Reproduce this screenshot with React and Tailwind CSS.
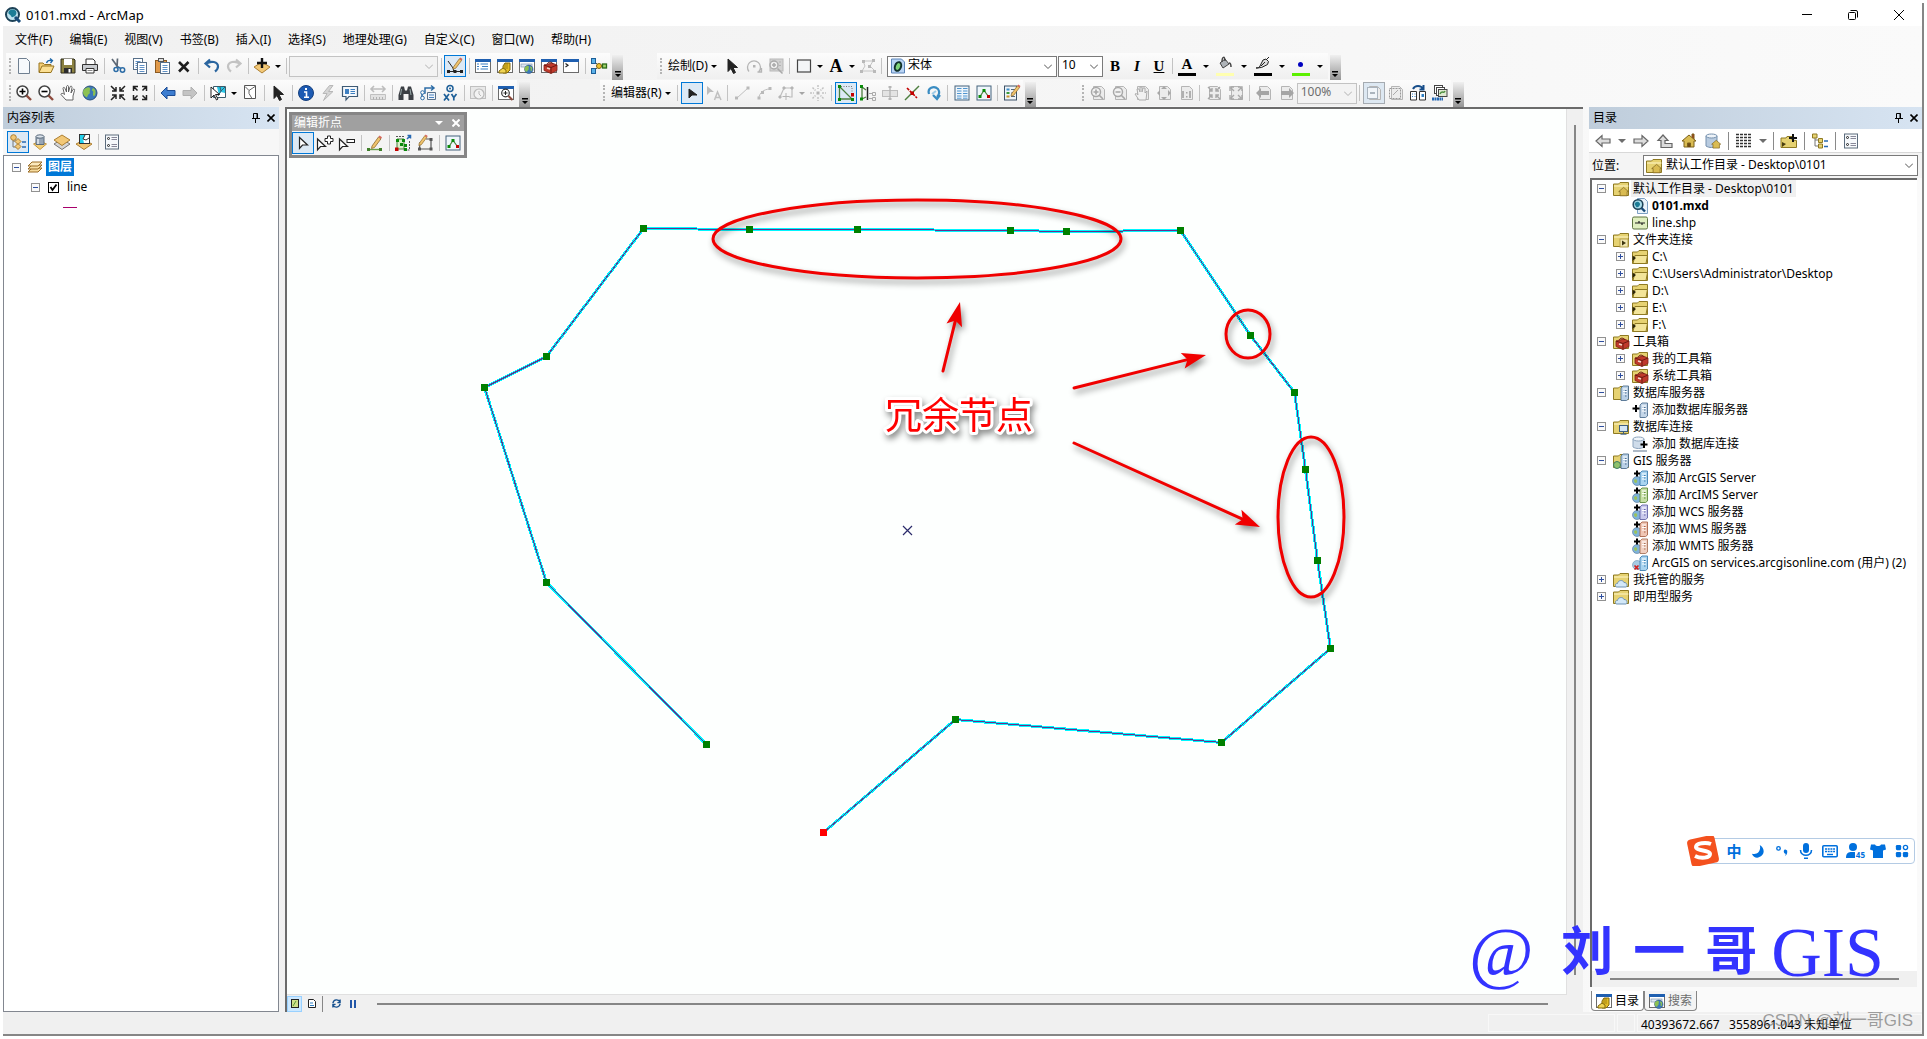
import React, { useState } from "react";
import clsx from "clsx";

const FONT = "font-['Noto_Sans','Noto_Sans_CJK_SC',sans-serif]";

const appWindow = (
  <>
    <rect x="0.5" y="1.5" width="15" height="13" fill="#fff" stroke="#6b6b6b" />
    <rect x="0" y="1" width="16" height="3" fill="#1f5fb0" />
  </>
);

const folder = (
  <path d="M.5 14.500V3h5l1.500-1.500h8.500v13z" fill="#e6d272" stroke="#8f7a22" />
);

const page = (
  <path d="M2.500.500h8l3 3v12h-11z" fill="#f6f9fc" stroke="#6f7f90" />
);

const grayPage = (
  <path d="M3.500 1.500h8l3 3v10h-11z" fill="#ececec" stroke="#b5b5b5" />
);

const globe = (
  <>
    <circle cx="8" cy="8" r="7" fill="#3b78b8" stroke="#2a4f7c" />
    <path d="M4 3c3-2 5 0 4 2s1 3-1 4-1 4-3 3-3-3-3-5 1-3 3-4zm7 0c3 1 3 5 2 7s-2 1-2-1 1-2-.5-3 0-2 .5-3z" fill="#8cc152" />
  </>
);

const toolbox = (
  <>
    <path d="M3 7l8-2 5 2v5.500l-6 3-7-3z" fill="#c0392b" stroke="#7e1f17" strokeWidth="0.8" />
    <path d="M3 7l7 2.500L16 7M10 9.500v6M6.500 6c0-2.500 5-2.500 5 0" fill="none" stroke="#6d1a13" />
    <path d="M6 10l3 1" stroke="#f3d9c9" strokeWidth="1.500" />
  </>
);

const magnifier = (
  <>
    <circle cx="6.500" cy="6.500" r="5.500" fill="#fff" stroke="#444" strokeWidth="1.500" />
    <path d="M10.500 10.500l4.500 4.500" stroke="#8d4a3c" strokeWidth="2.400" />
  </>
);

const house = (
  <path d="M8 2l7 6h-2v6H3V8H1z" fill="#d9bb52" stroke="#7c611b" />
);

const smallPage = (x, y) => (
  <>
    <rect x={x} y={y} width="9" height="11" fill="#fff" stroke="#58708a" />
    <path d={`M${x + 2} ${y + 3}h5M${x + 2} ${y + 5}h5M${x + 2} ${y + 7}h5M${x + 2} ${y + 9}h5`} stroke="#4c83c0" strokeWidth="0.9" />
  </>
);

const pencil = (
  <>
    <path d="M5 11l6.500-9 2.500 1.800L7.500 12.500 4.500 13.500z" fill="#f0c36d" stroke="#8d6a2b" strokeWidth="0.8" />
    <path d="M11.500 2l1-1.500 2.500 1.800-1 1.500z" fill="#d9655b" />
  </>
);

const server = (tint, dark) => (
  <>
    <path d="M8 3l2-2h5.500v13l-2 1.500H8z" fill={tint} stroke={dark} strokeWidth="0.9" />
    <path d="M10 4h4M10 6.500h4M10 9h4" stroke="#fff" strokeWidth="1.200" />
    <path d="M12 5.500h1.500M12 8h1.500M12 11h1.500" stroke={dark} />
  </>
);

const addServer = (tint, dark) => (
  <>
    <circle cx="5" cy="11" r="4.500" fill="#7fb3d9" stroke="#55779a" strokeWidth="0.6" />
    <path d="M2 10c2-2 4 0 3 2s-3 1-3-2z" fill="#9cc45a" />
    {server(tint, dark)}
    <path d="M5 .500v6M2 3.500h6" stroke="#000" strokeWidth="2" />
  </>
);

const ICONS = {
  arcmap: (
    <>
      <circle cx="7.500" cy="7.500" r="6.500" fill="#bfe3ef" stroke="#1d4257" strokeWidth="2" />
      <path d="M4 4c2-2 5-2 7 0 1 2 0 4-1 5-2 1-3 2-4 0S2 7 4 4z" fill="#1b7c95" />
      <path d="M10 10l5 5" stroke="#174a78" strokeWidth="3" />
    </>
  ),
  new: page,
  open: (
    <>
      <path d="M1 14V5h4l1.500 1.500H13V8" fill="#f4cf77" stroke="#98741f" />
      <path d="M1 14.500l3-6.500h12l-3 6.500z" fill="#fbdf93" stroke="#98741f" />
      <path d="M8.500 5c1-3 3-3 5-2.500M12 .500l2.500 2-2 2.500" fill="none" stroke="#1e67a8" strokeWidth="1.300" />
    </>
  ),
  save: (
    <>
      <path d="M1 1h13l1 1v13H1z" fill="#8b8141" stroke="#2c2a1a" />
      <rect x="4" y="1" width="8" height="6" fill="#fff" />
      <rect x="4" y="10" width="8" height="5" fill="#2b2b2b" />
      <rect x="8.500" y="11" width="2" height="3.500" fill="#fff" />
    </>
  ),
  print: (
    <>
      <path d="M4 6V1h7l2 2v3" fill="#fff" stroke="#333" />
      <path d="M.500 6.500h15v6H.500z" fill="#c9ccd0" stroke="#333" />
      <path d="M4 10.500h8v4.500H4z" fill="#fff" stroke="#333" />
      <path d="M5.500 12.500h5" stroke="#888" />
    </>
  ),
  cut: (
    <>
      <path d="M2 1l6.500 9M7.500 .500L7 9" stroke="#5d6875" strokeWidth="1.700" />
      <circle cx="6" cy="11.500" r="2" fill="none" stroke="#2c6ca6" strokeWidth="1.500" />
      <circle cx="12.500" cy="12" r="2.200" fill="none" stroke="#2c6ca6" strokeWidth="1.500" />
      <path d="M8 9l3 1.500" stroke="#2c6ca6" strokeWidth="1.500" />
    </>
  ),
  copy: (
    <>
      {smallPage(1.5, 0.5)}
      {smallPage(5.5, 4.5)}
    </>
  ),
  paste: (
    <>
      <rect x="1.500" y="2.500" width="11" height="12" fill="#e0994a" stroke="#8a5a22" />
      <rect x="4.500" y=".500" width="5" height="3" fill="#ddd" stroke="#555" />
      {smallPage(6.5, 4.5)}
    </>
  ),
  delete: <path d="M3 4l9.500 9.500M12.500 4L3 13.500" stroke="#1d1d1d" strokeWidth="2.600" />,
  undo: <path d="M6 1.500L1.500 5.500 6 9.500M2 5.500c5-3 12-2 12 3 0 2-1 3.500-3 5" fill="none" stroke="#2a659f" strokeWidth="2.200" />,
  redo: <path d="M10 1.500l4.500 4L10 9.500M14 5.500C9 2.500 2 3.500 2 8.500c0 2 1 3.500 3 5" fill="none" stroke="#c3c3c3" strokeWidth="2.200" />,
  addData: (
    <>
      <path d="M0 9l8-5 8 5-8 6z" fill="#f2c877" stroke="#ad7f31" />
      <path d="M8 0v10M3 5h10" stroke="#111" strokeWidth="2.400" />
    </>
  ),
  editor: (
    <>
      <path d="M1 3l5 7 1 4" fill="none" stroke="#222" />
      <path d="M1 13.500h14" stroke="#222" />
      <path d="M0 12h3v3H0zM6.500 12h3v3h-3zM13 12h3v3h-3z" fill="#222" />
      <g transform="translate(2 -1) scale(.9)">{pencil}</g>
    </>
  ),
  toc: (
    <>
      {appWindow}
      <path d="M2 6h2M5.500 6H13M2 8.500h2M7 8.500h6M2 11h2M5.500 11H13" stroke="#3d7fc1" strokeWidth="1.200" />
    </>
  ),
  catalog: (
    <>
      {appWindow}
      <path d="M6 8l2-3h5v7l-3 3H6z" fill="#e3bc25" stroke="#846a0d" />
      <path d="M8 5v6M10 5v6" stroke="#846a0d" strokeWidth="0.7" />
      <path d="M2 15v-2l4-3 3 2v3z" fill="#f0d454" stroke="#846a0d" />
    </>
  ),
  search: (
    <>
      {appWindow}
      <rect x="2" y="6" width="11" height="3" fill="#dfe8f2" stroke="#8298b3" strokeWidth="0.7" />
      <g transform="translate(5 6.500) scale(.6)">{globe}</g>
    </>
  ),
  toolboxWindow: (
    <>
      {appWindow}
      {toolbox}
    </>
  ),
  python: (
    <>
      {appWindow}
      <path d="M2.500 5.500l2.500 1.800L2.500 9" fill="none" stroke="#222" strokeWidth="1.200" />
    </>
  ),
  model: (
    <>
      <path d="M3 3l5 5h4M3 13l5-5" fill="none" stroke="#555" />
      <rect x="0.500" y="0.500" width="4" height="5" fill="#5bb1e8" stroke="#1c5f98" />
      <rect x="0.500" y="10.500" width="4" height="5" fill="#5bb1e8" stroke="#1c5f98" />
      <circle cx="8" cy="8" r="2.500" fill="#f1c430" stroke="#7c6412" />
      <rect x="11.500" y="6" width="4" height="4" fill="#9fd06c" stroke="#2c6b19" strokeWidth="1.300" />
    </>
  ),
  zoomIn: (
    <>
      {magnifier}
      <path d="M6.500 3.500v6M3.500 6.500h6" stroke="#000" strokeWidth="1.600" />
    </>
  ),
  zoomOut: (
    <>
      {magnifier}
      <path d="M3.500 6.500h6" stroke="#000" strokeWidth="1.600" />
    </>
  ),
  pan: <path d="M6 15L1 9.500c0-1.500 2-1.500 3.500 0L3 3.500c0-1.500 1.500-1.500 2 0L6.500 7V1.500c.5-1.500 2-1 2 0V7l1.500-5c.5-1.500 2-1 2 .5L11 8l2-3.500c1-1 2 0 1.500 1L13 11v4z" fill="#fff" stroke="#555" strokeWidth="0.9" />,
  globe,
  fixedIn: (
    <path d="M1 1l5 5M15 1l-5 5M1 15l5-5M15 15l-5-5M6 2v4H2M10 2v4h4M2 10h4v4M14 10h-4v4" fill="none" stroke="#222" strokeWidth="1.500" />
  ),
  fixedOut: (
    <path d="M1.500 1.500l4 4M14.500 1.500l-4 4M1.500 14.500l4-4M14.500 14.500l-4-4M1.500 6V1.500H6M10 1.500h4.500V6M6 14.500H1.500V10M14.500 10v4.500H10" fill="none" stroke="#222" strokeWidth="1.500" />
  ),
  back: <path d="M1 8l6-6v3.500h8v5H7V14z" fill="#3d7dd0" stroke="#1c4c94" />,
  forward: <path d="M15 8L9 2v3.500H1v5h8V14z" fill="#c4c4c4" stroke="#b0b0b0" />,
  selectFeatures: (
    <>
      <path d="M3.500 1.500h12v11h-12z" fill="#fff" stroke="#3a5b6b" />
      <path d="M7 2h8v6l-4-1-2 3z" fill="#28c6e6" />
      <path d="M10 2l1 4-3 5M11 6l4-4" fill="none" stroke="#3a5b6b" />
      <path d="M1 2v11l3-3 2.500 5 1.500-1-2.500-4.500h4z" fill="#fff" stroke="#222" />
    </>
  ),
  clearSelection: (
    <>
      <path d="M2.500.500h11v13h-11z" fill="#fff" stroke="#555" />
      <path d="M3 1.500l4 4 6-4M7 5.500v3l3 5" fill="none" stroke="#666" />
    </>
  ),
  pointer: <path d="M4 1v12.500l3-3 2.500 5 2-1L9 9.500h4.500z" fill="#222" stroke="#222" />,
  identify: (
    <>
      <circle cx="8" cy="8" r="7.500" fill="#1d5bb3" stroke="#16407e" />
      <path d="M6 7h2.500v5M6 12.300h5" fill="none" stroke="#fff" strokeWidth="1.600" />
      <rect x="7" y="3" width="2" height="2" fill="#fff" />
    </>
  ),
  hyperlink: <path d="M9.500.500L3 8.500h4L3.500 15.500 13 6.500H8.500L13 .500z" fill="#d5d5d5" stroke="#b8b8b8" />,
  popup: (
    <>
      <path d="M.500 1.500h15v10H7l-3 3.500v-3.500H.500z" fill="#f4f8fc" stroke="#3d5a75" strokeWidth="1.200" />
      <rect x="3" y="4" width="4" height="5" fill="#3d7fc1" />
      <path d="M8.500 4.500H13M8.500 6.500H13M8.500 8.500H13" stroke="#3d7fc1" />
    </>
  ),
  measure: (
    <>
      <path d="M1 4h14M4 1L1 4l3 3M12 1l3 3-3 3" fill="none" stroke="#bdbdbd" strokeWidth="1.600" />
      <path d="M.500 9.500h15v5H.500z" fill="#e2e2e2" stroke="#c0c0c0" />
      <path d="M3.500 12v2.500M6.500 12v2.500M9.500 12v2.500M12.500 12v2.500" stroke="#b0b0b0" />
    </>
  ),
  find: (
    <>
      <path d="M3 1.500h3l1 4h2l1-4h3l2.500 8.500v5h-5V9h-5v6h-5v-5z" fill="#3b3f44" />
      <path d="M3.500 4L2.500 10M12 4l1 6" stroke="#9aa" />
    </>
  ),
  findRoute: (
    <>
      <path d="M2 12V8h3V3h9M11 .500L14 3l-3 2.500" fill="none" stroke="#2c6ca6" strokeWidth="1.500" />
      <circle cx="2.500" cy="7.500" r="1.800" fill="#fff" stroke="#2c6ca6" />
      <circle cx="2.500" cy="13" r="1.800" fill="#fff" stroke="#2c6ca6" />
      <path d="M7.500 7.500h8v7h-8z" fill="#eef4fa" stroke="#58708a" />
      <path d="M9 10h5M9 12.500h5" stroke="#4c83c0" />
    </>
  ),
  goToXY: (
    <>
      <circle cx="8" cy="3.500" r="3" fill="none" stroke="#1d5f98" strokeWidth="1.500" />
      <circle cx="8" cy="3.500" r="1" fill="#1d5f98" />
      <path d="M2 9l5 6.500M7 9l-5 6.500M9.500 9l2.300 3.500L14.500 9M11.800 12v3.500" fill="none" stroke="#1d5f98" strokeWidth="1.700" />
    </>
  ),
  time: (
    <>
      <rect x=".500" y="1.500" width="15" height="12" fill="#e8e8e8" stroke="#c0c0c0" />
      <circle cx="9" cy="9" r="5" fill="#f2f2f2" stroke="#b9b9b9" strokeWidth="1.200" />
      <path d="M9 6v3l2 2" fill="none" stroke="#b9b9b9" />
    </>
  ),
  viewer: (
    <>
      {appWindow}
      <circle cx="7.500" cy="8" r="3.800" fill="#fff" stroke="#333" strokeWidth="1.200" />
      <path d="M7.500 6v4M5.500 8h4" stroke="#222" />
      <path d="M10.500 11l4 4" stroke="#8d4a3c" strokeWidth="2" />
    </>
  ),
  rotate: (
    <>
      <path d="M3 13.500a6.500 6.500 0 1 1 10 0M15.500 10v4h-4" fill="none" stroke="#b5b5b5" strokeWidth="1.300" />
      <rect x="7" y="7" width="2.500" height="2.500" fill="#b5b5b5" />
    </>
  ),
  zoomSelected: (
    <>
      <rect x="2" y="1" width="13" height="12" fill="#d2d2d2" stroke="#b8b8b8" />
      <circle cx="6" cy="7" r="4" fill="#eee" stroke="#a9a9a9" strokeWidth="1.400" />
      <path d="M6 5v4M4 7h4M12 3.500v1M12 7v1M9.500 10.500l5 5" stroke="#a9a9a9" strokeWidth="1.500" />
    </>
  ),
  rectangle: <rect x="1.500" y="2" width="13" height="12" fill="#f3f5f7" stroke="#444" strokeWidth="1.200" />,
  editVertices: (
    <>
      <path d="M3 3h10L10 8l5 5H2l3-5z" fill="none" stroke="#c4c4c4" />
      <path d="M2 2h3v3H2zM12 1h3v3h-3zM8 7h3v3H8zM0 12h3v3H0zM13 12h3v3h-3z" fill="#b9b9b9" />
    </>
  ),
  fontDoc: (
    <>
      <path d="M1.500 1h10l3 3v11h-13z" fill="#b9d4f5" stroke="#5b84b8" />
      <ellipse cx="8" cy="8.500" rx="3" ry="4.500" transform="rotate(20 8 8.500)" fill="#7fd47a" stroke="#12312b" strokeWidth="2" />
    </>
  ),
  bucket: (
    <>
      <path d="M3 7l5-4 4 5-6 4z" fill="#aeb3b8" stroke="#444" />
      <path d="M5 6c0-6 3-6 3-1M12 7c2 0 2 2 2 4" fill="none" stroke="#444" strokeWidth="1.500" />
    </>
  ),
  pen: (
    <>
      <path d="M1 12c2 0 3 0 4-2L8 4l3-1 2.500 2.500-1 3-6 3z" fill="#ddd" stroke="#222" />
      <path d="M6 10l4-4M12 3l2-2" stroke="#222" />
    </>
  ),
  editTool: <path d="M5 4v9l3-3h5z" fill="#222" stroke="#222" />,
  editAnno: (
    <>
      <path d="M1 1v9l3-3h4z" fill="#bdbdbd" />
      <path d="M8.500 15l3-8 3.500 8M9.500 12.500h4" fill="none" stroke="#c0c0c0" strokeWidth="1.500" />
    </>
  ),
  straight: (
    <>
      <path d="M3 13L14 3" stroke="#c0c0c0" />
      <path d="M1 11.500h3v3H1zM12.500 1.500h3v3h-3z" fill="#b9b9b9" />
    </>
  ),
  arc: (
    <>
      <path d="M3 13c0-5 5-9 11-9" fill="none" stroke="#c0c0c0" />
      <path d="M1.500 11.500h3v3h-3zM5 6h3v3H5zM12.500 2h3v3h-3z" fill="#b9b9b9" />
    </>
  ),
  trace: (
    <>
      <path d="M2 12L6 3h8v9h-3" fill="none" stroke="#bdbdbd" strokeWidth="1.200" />
      <path d="M8 8v7M4.500 11.500h7M5 2h2v2H5zM13 2h2v2h-2zM1 11h2v2H1z" stroke="#b5b5b5" fill="#b5b5b5" />
    </>
  ),
  point: (
    <>
      <path d="M8 0v4M8 12v4M0 8h4M12 8h4M2.500 2.500l3 3M13.500 2.500l-3 3M2.500 13.500l3-3M13.500 13.500l-3-3" stroke="#c3c3c3" strokeWidth="1.500" strokeDasharray="2 1" />
      <rect x="6.500" y="6.500" width="3" height="3" fill="#b5b5b5" />
    </>
  ),
  reshapeVertices: (
    <>
      <path d="M3 1.500h11v9" fill="none" stroke="#777" strokeDasharray="1 1.500" />
      <path d="M1.500 2v12h12.500L2 2" fill="none" stroke="#4d7f3f" strokeWidth="1.300" />
      <path d="M0 0h3v3H0zM0 13h3v3H0zM13 13h3v3h-3z" fill="#0a8a0a" />
      <rect x="13" y="8" width="3" height="3.500" fill="#c40000" />
    </>
  ),
  reshape: (
    <>
      <path d="M2 2v12l4-2M2 2l4 3" fill="none" stroke="#4d7f3f" strokeWidth="1.300" />
      <path d="M0 0h3v3H0zM0 12.500h3v3H0z" fill="#0a8a0a" />
      <path d="M7.500 2v13" stroke="#222" strokeWidth="1.500" />
      <path d="M9 8.500h3M9 13.500h3M12.500 7.500h3v3h-3zM12.500 12.500h3v3h-3z" fill="none" stroke="#aaa" />
    </>
  ),
  cutPolygon: (
    <>
      <rect x=".500" y="5.500" width="15" height="6" fill="#e3e3e3" stroke="#bdbdbd" />
      <path d="M8 1v14" stroke="#b5b5b5" strokeWidth="1.400" />
      <path d="M6.500 1h3v2h-3zM6.500 13h3v2h-3z" fill="#b5b5b5" />
    </>
  ),
  split: (
    <>
      <path d="M1 15L15 1" stroke="#4d7f3f" strokeWidth="1.400" />
      <path d="M3 3l10 10" stroke="#c40000" strokeWidth="1.600" strokeDasharray="3 1" />
      <rect x="6.500" y="6.500" width="3.500" height="3.500" fill="#c40000" />
    </>
  ),
  rotateTool: (
    <>
      <path d="M3 9C1 3 8 0 12 4c2 3 1 6-1 8M7 10l4 4 3-4" fill="none" stroke="#3a8cc2" strokeWidth="2.200" />
      <path d="M6 9l4-3" stroke="#9fcbe6" strokeWidth="2" />
    </>
  ),
  attributes: (
    <>
      <rect x="1" y="1" width="14" height="14" fill="#eef5fb" stroke="#45637d" />
      <path d="M3 3.500h4.500M3 6h4.500M3 8.500h4.500M3 11h4.500M9 3.500h4.500M9 6h4.500M9 8.500h4.500M9 11h4.500M3 13.200h4.500M9 13.200h4.500" stroke="#4f95d0" />
    </>
  ),
  sketchProps: (
    <>
      <rect x="1" y="1" width="14" height="14" fill="#eff6fb" stroke="#45637d" />
      <path d="M4 11.500l4-6 4.500 6" fill="none" stroke="#4d7f3f" strokeWidth="1.200" />
      <path d="M2.500 10h3v3h-3zM6.500 4h3v3h-3z" fill="#0a8a0a" />
      <path d="M11 10h3v3h-3z" fill="#c40000" />
    </>
  ),
  createFeatures: (
    <>
      <rect x=".500" y="1" width="12" height="14" fill="#eff4f9" stroke="#3c5368" />
      <path d="M2.500 3.500h3v2h-3z" fill="#3d8fc9" />
      <path d="M2.500 7h3v2h-3z" fill="#3a9b3a" />
      <path d="M2.500 10.500h3v2h-3z" fill="#c9962d" />
      <path d="M7 4.500h4M7 8h4M7 11.500h4" stroke="#567" />
      <g transform="translate(3 -1) scale(.9)">{pencil}</g>
    </>
  ),
  pageZoomIn: (
    <>
      {grayPage}
      <circle cx="6" cy="7" r="4.500" fill="#f3f3f3" stroke="#a8a8a8" strokeWidth="1.500" />
      <path d="M6 4.500v5M3.500 7h5M9 10l4 4" stroke="#a8a8a8" strokeWidth="1.700" />
    </>
  ),
  pageZoomOut: (
    <>
      {grayPage}
      <circle cx="6" cy="7" r="4.500" fill="#f3f3f3" stroke="#a8a8a8" strokeWidth="1.500" />
      <path d="M3.500 7h5M9 10l4 4" stroke="#a8a8a8" strokeWidth="1.700" />
    </>
  ),
  pagePan: (
    <>
      {grayPage}
      <path d="M5 15L1 9c1-1 2 0 3 1L3 4h2l1 3V2h2v5l1-4h2v5l2-2-1 9z" fill="#f1f1f1" stroke="#acacac" />
    </>
  ),
  pageWhole: (
    <>
      {grayPage}
      <path d="M8 1l3 3H5zM8 15l3-3H5zM1 8l3-3v6zM15 8l-3-3v6z" fill="#a8a8a8" />
    </>
  ),
  pageActual: (
    <>
      {grayPage}
      <path d="M5 6v7M12 6v7" stroke="#a5a5a5" strokeWidth="1.700" />
      <path d="M8 7h1.500v1.500H8zM8 11h1.500v1.500H8z" fill="#a5a5a5" />
    </>
  ),
  pageFixedIn: (
    <>
      {grayPage}
      <path d="M2 2l4 4M14 2l-4 4M2 14l4-4M14 14l-4-4M6 3v3H3M10 3v3h3M3 10h3v3M13 10h-3v3" fill="none" stroke="#a8a8a8" strokeWidth="1.400" />
    </>
  ),
  pageFixedOut: (
    <>
      {grayPage}
      <path d="M3 3l3 3M13 3l-3 3M3 13l3-3M13 13l-3-3M2 6V2h4M10 2h4v4M6 14H2v-4M14 10v4h-4" fill="none" stroke="#a8a8a8" strokeWidth="1.400" />
    </>
  ),
  pageBack: (
    <>
      {grayPage}
      <path d="M0 8l5-5v3h8v4H5v3z" fill="#a5a5a5" />
    </>
  ),
  pageForward: (
    <>
      {grayPage}
      <path d="M16 8l-5-5v3H3v4h8v3z" fill="#a5a5a5" />
    </>
  ),
  draftMode: (
    <>
      {grayPage}
      <rect x="1.500" y="2.500" width="10" height="11" fill="#f1f5f9" stroke="#aab4be" />
      <path d="M4 8h5" stroke="#9aa4ae" strokeWidth="1.600" />
    </>
  ),
  focusFrame: (
    <>
      {grayPage}
      <path d="M1.500 3.500h11v10h-11z" fill="none" stroke="#999" strokeDasharray="2 1" />
      <path d="M5 10l5-5" stroke="#aaa" />
    </>
  ),
  changeLayout: (
    <>
      <path d="M.500 6.500h6v8.500h-6zM9.500 6.500h6v8.500h-6z" fill="#fff" stroke="#333" />
      <path d="M3 4c2-4 8-4 10 0M13.500 0v4.500h-4" fill="none" stroke="#174e8a" strokeWidth="2" />
      <rect x="11.500" y="9" width="2.500" height="3" fill="#2f80c4" />
      <path d="M2 9h1M2 11.500h1M4.500 9h1M4.500 11.500h1" stroke="#2f80c4" />
    </>
  ),
  drivenPages: (
    <>
      <rect x="2.500" y=".500" width="8" height="8" fill="#fff" stroke="#444" />
      <rect x="4.500" y="2.500" width="8" height="8" fill="#fff" stroke="#444" />
      <rect x="6.500" y="4.500" width="8.500" height="7" fill="#dfead2" stroke="#444" />
      <path d="M8 9c2-4 4 0 5-3" fill="none" stroke="#4d8f3f" strokeWidth="1.500" />
      <path d="M0 14h11" stroke="#2769b3" strokeWidth="3" strokeDasharray="2 .500" />
    </>
  ),
  listByDrawing: (
    <>
      <path d="M3 4v9h5M3 7h5" fill="none" stroke="#777" />
      <circle cx="3.500" cy="3.500" r="2.800" fill="#f2c877" stroke="#ad7f31" />
      <path d="M8 4.500l3 3-3 3-3-3zM8 9.500l3 3-3 3-3-3z" fill="#f2c877" stroke="#ad7f31" />
      <path d="M12 8h4M12 13h4" stroke="#2769b3" strokeWidth="1.500" />
    </>
  ),
  listBySource: (
    <>
      <path d="M1.500 10L8 7l6.500 3L8 15.500z" fill="#f4cf77" stroke="#c4963e" />
      <path d="M4 2.500h8v8H4z" fill="#97a5b5" stroke="#5c6c7d" />
      <ellipse cx="8" cy="2.500" rx="4" ry="1.700" fill="#dce4ec" stroke="#5c6c7d" />
      <path d="M6 5v5" stroke="#e7edf3" strokeWidth="1.500" />
    </>
  ),
  listByVisibility: (
    <>
      <path d="M0 10l8-5 8 5-8 5.500z" fill="#d5d5d5" stroke="#777" />
      <path d="M0 6l8-5 8 5-8 5.500z" fill="#f2c877" stroke="#ad7f31" />
    </>
  ),
  listBySelection: (
    <>
      <path d="M0 10l8-4 8 4-8 5.500z" fill="#f2c877" stroke="#ad7f31" />
      <rect x="3.500" y=".500" width="10" height="9" fill="#fff" stroke="#333" />
      <path d="M4 1h5l-2 4 1 4H4z" fill="#25d3ee" />
      <path d="M9 1L7 5l3 1 3-2" fill="none" stroke="#333" />
    </>
  ),
  options: (
    <>
      <rect x="1.500" y="1" width="13" height="14" fill="#f6f9fc" stroke="#5c6c7d" />
      <circle cx="4.500" cy="4.500" r="1" fill="none" stroke="#222" />
      <circle cx="4.500" cy="11.500" r="1" fill="none" stroke="#222" />
      <path d="M7.500 3.500H13M7.500 5.500H13M7.500 10.500H13M7.500 12.500H13" stroke="#889" />
    </>
  ),
  layers: (
    <>
      <path d="M1 13l4-4h10l-4 4z" fill="#f6dca0" stroke="#9b6d24" />
      <path d="M1 10l4-4h10l-4 4z" fill="#f6dca0" stroke="#9b6d24" />
      <path d="M1 7l4-4h10l-4 4z" fill="#fbe9bd" stroke="#9b6d24" />
    </>
  ),
  vertexEdit: <path d="M4.500 2.500v11l3-3.500h5z" fill="#fff" stroke="#222" strokeWidth="1.200" />,
  vertexAdd: (
    <>
      <path d="M.500 4v11l3-3.500h5z" fill="#fff" stroke="#222" strokeWidth="1.200" />
      <path d="M10.500 1h3v2.500H16v3h-2.500V9h-3V6.500H8v-3h2.500z" fill="#fff" stroke="#222" />
    </>
  ),
  vertexDelete: (
    <>
      <path d="M.500 4v11l3-3.500h5z" fill="#fff" stroke="#222" strokeWidth="1.200" />
      <rect x="8" y="4.500" width="7.500" height="3" fill="#fff" stroke="#222" />
    </>
  ),
  continueFeature: (
    <>
      <path d="M1 14.500h13" stroke="#6aa04b" strokeWidth="1.400" />
      <path d="M0 13h3v3H0zM12 13h3v3h-3z" fill="#3f7f2a" />
      {pencil}
    </>
  ),
  finishPart: (
    <>
      <path d="M2 4h7v10H2z" fill="#d8efc8" stroke="#4d7f3f" />
      <path d="M1 1.500h9M14.500 6v9H8" fill="none" stroke="#555" strokeDasharray="2 1" />
      <path d="M1 4h3v3H1zM7 4h3v3H7zM5 8h3v3H5zM9 9h3v3H9zM9 13h3v3H9z" fill="#0a8a0a" />
      <rect x="0" y="12.500" width="3.500" height="3.500" fill="#c40000" />
      <path d="M12 4l3-3M12.500.500H15.500V3.500" fill="none" stroke="#2769b3" strokeWidth="1.500" />
    </>
  ),
  finishSketch: (
    <>
      <path d="M2.500 14L3 7M9 4h5v10H2.500" fill="none" stroke="#555" strokeWidth="1.200" />
      <path d="M1 12.500h3v3H1zM12.500 12.500h3v3h-3zM12.500 3h3v3h-3z" fill="#555" />
      <g transform="translate(-2 -1) scale(.85)">{pencil}</g>
    </>
  ),
  catBack: <path d="M1 8l6-5.500V6h8v4H7v3.500z" fill="#dcdcdc" stroke="#666" strokeWidth="1.200" />,
  catForward: <path d="M15 8L9 2.500V6H1v4h8v3.500z" fill="#dcdcdc" stroke="#666" strokeWidth="1.200" />,
  catUp: <path d="M1 7.500l5-5.500 5 5.500H8v3h7v4H4v-7z" fill="#dcdcdc" stroke="#666" strokeWidth="1.200" />,
  catHome: (
    <>
      <path d="M11 5V1h2v6" fill="#a53a22" stroke="#7c611b" />
      {house}
      <path d="M6.500 14v-4h3v4" fill="#6e4a12" stroke="#7c611b" />
    </>
  ),
  catDatabase: (
    <>
      <path d="M1 3v10c3 2 8 2 11 0V3z" fill="#b8cbe0" stroke="#7590ad" />
      <ellipse cx="6.500" cy="3" rx="5.500" ry="2" fill="#edf3f9" stroke="#7590ad" />
      <g transform="translate(6 6) scale(.65)">{house}</g>
    </>
  ),
  catView: (
    <path d="M0 1.500h16M0 4.500h16M0 7.500h16M0 10.500h16M0 13.500h16" stroke="#333" strokeWidth="1.400" strokeDasharray="3 1" />
  ),
  catConnect: (
    <>
      <path d="M0 14.500V5h5l1-1.500h5V7l4.500.500v7z" fill="#e6d272" stroke="#8f7a22" />
      <path d="M12 1v8M8 5h8" stroke="#111" strokeWidth="2" />
      <path d="M1 9l4 2-4 3z" fill="#4a3f10" />
    </>
  ),
  catTree: (
    <>
      <path d="M3 4v9h5M3 7h5" fill="none" stroke="#777" />
      <path d="M.500 1h4.500v4H.500zM6.500 5.500h4v4h-4zM6.500 11h4v4h-4z" fill="#e6d272" stroke="#8f7a22" />
      <path d="M12 8h4M12 13.500h4" stroke="#2769b3" strokeWidth="1.500" />
    </>
  ),
  folderHome: (
    <>
      {folder}
      <path d="M1 5h14.500" stroke="#fff6c8" />
      <g transform="translate(5 5) scale(.7)">{house}</g>
    </>
  ),
  mxd: (
    <>
      <path d="M5.500.500h7l3 3v12h-10z" fill="#eaf3fb" stroke="#7ca0c4" />
      <circle cx="6" cy="6.500" r="4.800" fill="#a9dcea" stroke="#1d4257" strokeWidth="1.600" />
      <path d="M3.500 4.500c2-2 5 0 4.500 2s-3 4-4 2-2-2-.5-4z" fill="#1b7c95" />
      <path d="M9.500 10l3.500 3.500" stroke="#174a78" strokeWidth="2.400" />
    </>
  ),
  shapefile: (
    <>
      <rect x=".500" y="2" width="15" height="12" rx="1.500" fill="#e0efc0" stroke="#5d7440" />
      <path d="M3 8h4M7 6v2h6M10 8v2" fill="none" stroke="#222" strokeWidth="1.200" />
    </>
  ),
  folderConnections: (
    <>
      {folder}
      <path d="M1 5h14.500" stroke="#fff6c8" />
      <rect x="7" y="7" width="8" height="8" fill="#f0e6b0" stroke="#b5a04a" />
      <path d="M9 8.500l4 2.500-4 2.500z" fill="#3d3510" />
    </>
  ),
  folderConnected: (
    <>
      {folder}
      <path d="M1 14.500l2-8h12.500l-1.500 8z" fill="#f3e59a" stroke="#8f7a22" />
      <path d="M.500 6.500l3.500 2.500-3.500 3z" fill="#2b250a" />
    </>
  ),
  toolboxFolder: (
    <>
      {folder}
      {toolbox}
    </>
  ),
  dbServers: (
    <>
      {folder}
      {server("#b9d0e6", "#4f6f90")}
    </>
  ),
  addDbServer: (
    <>
      {server("#c4d6e8", "#4f6f90")}
      <path d="M4 3v7M.500 6.500h7" stroke="#000" strokeWidth="2" />
    </>
  ),
  dbConnections: (
    <>
      {folder}
      <path d="M1 5h14.500" stroke="#fff6c8" />
      <rect x="6.500" y="6.500" width="8" height="6" fill="#d5e6f5" stroke="#3f5f80" />
      <path d="M10.500 13v2M7.500 15.200h6" stroke="#3f5f80" />
    </>
  ),
  addDbConnection: (
    <>
      <path d="M1 3v8c3 2 8 2 11 0V3z" fill="#cfdcea" stroke="#8da4bd" />
      <ellipse cx="6.500" cy="3" rx="5.500" ry="2" fill="#f2f6fa" stroke="#8da4bd" />
      <path d="M1 15h14" stroke="#9aa8b8" strokeWidth="1.600" />
      <path d="M12 5v7M8.500 8.500h7" stroke="#000" strokeWidth="2" />
    </>
  ),
  gisServers: (
    <>
      {folder}
      {server("#b9d0e6", "#4f6f90")}
      <circle cx="4" cy="12" r="3.500" fill="#8fc16b" stroke="#3c7a62" />
    </>
  ),
  arcgisServer: addServer("#a9d4f0", "#3f80b0"),
  arcimsServer: addServer("#c7dfa6", "#5e8a3a"),
  wcsServer: addServer("#c9c9ec", "#6464a6"),
  wmsServer: addServer("#f0c6b4", "#a8644a"),
  wmtsServer: addServer("#f0cfc0", "#a8745a"),
  serverOffline: (
    <>
      <circle cx="5" cy="10" r="4.500" fill="#a6cbe4" stroke="#6d93b3" strokeWidth="0.6" />
      {server("#a9d4f0", "#3f80b0")}
      <path d="M2.500 10.500l4 4M6.500 10.500l-4 4" stroke="#d21f1f" strokeWidth="1.700" />
    </>
  ),
  cloudFolder: (
    <>
      {folder}
      <path d="M1 5h14.500" stroke="#fff6c8" />
      <path d="M3.500 15c-2-1-1-4 1-3.500C5 8 10 7.500 11 10.500c3-.5 4 4 2 4.500z" fill="#d3e8f8" stroke="#6f93b5" />
    </>
  ),
};

function Icon({ name }) {
  return (
    <svg viewBox="0 0 16 16" className="size-4 shrink-0 overflow-visible" aria-hidden="true">
      {ICONS[name]}
    </svg>
  );
}

function Tool({ name, label, active, muted, children }) {
  return (
    <button
      type="button"
      aria-label={label || name}
      className={clsx(
        "flex size-[22px] shrink-0 items-center justify-center",
        active && !muted && "border border-[#0078d7] bg-[#dce9f5]",
        active && muted && "border border-[#a5abb1] bg-[#dde8f2]",
      )}
    >
      {children || <Icon name={name} />}
    </button>
  );
}

function DropArrow({ muted, wide, label = "more" }) {
  return (
    <button
      type="button"
      aria-label={label}
      className={clsx("flex h-[22px] shrink-0 items-center justify-center", wide ? "w-4" : "w-[10px]")}
    >
      <svg viewBox="0 0 6 3" className="h-[3px] w-[6px]">
        <path d="M0 0h6L3 3z" fill={muted ? "#a5a5a5" : "#000"} />
      </svg>
    </button>
  );
}

function Sep() {
  return (
    <span className="flex w-[6px] shrink-0 justify-center">
      <span className="h-4 w-px bg-[#c3c3c3]" />
    </span>
  );
}

function Overflow() {
  return (
    <button
      type="button"
      aria-label="toolbar options"
      className="ml-[2px] flex h-[25px] w-[11px] shrink-0 items-end justify-center self-end bg-linear-to-b from-[#f0f0f0] to-[#969696] pb-[3px]"
    >
      <svg viewBox="0 0 6 7" className="h-[7px] w-[6px]">
        <path d="M0 1h6v1.500H0zM0 4h6L3 7z" fill="#000" />
      </svg>
    </button>
  );
}

function Toolbar({ className, children }) {
  return (
    <div className={clsx("flex h-[27px] shrink-0 items-start", className)}>
      <div className="flex h-[26px] items-center bg-linear-to-b from-[#fcfcfc] to-[#efefef]">
        <span className="flex w-[7px] justify-center">
          <span className="h-4 border-l-2 border-dotted border-[#b4b4b4]" />
        </span>
        {children}
      </div>
      <Overflow />
    </div>
  );
}

function MenuTool({ text }) {
  return (
    <button type="button" className="flex h-[22px] shrink-0 items-center gap-[3px] px-1 text-xs whitespace-nowrap">
      {text}
      <svg viewBox="0 0 6 3" className="h-[3px] w-[6px]">
        <path d="M0 0h6L3 3z" />
      </svg>
    </button>
  );
}

function Combo({ label, value, icon, disabled, className, padding }) {
  return (
    <div className={clsx("relative h-[21px]", className)}>
      {icon && (
        <span className="pointer-events-none absolute inset-y-0 left-[3px] flex items-center">
          <Icon name={icon} />
        </span>
      )}
      <select
        aria-label={label}
        disabled={disabled}
        className={clsx(
          "block h-[21px] w-full appearance-none border pr-4 pb-[2px] text-xs leading-4",
          padding || "pl-[3px]",
          disabled
            ? "border-[#c3c3c3] bg-[#f3f3f3] text-[#6d6d6d]"
            : "border-[#7a7a7a] bg-white text-black",
        )}
      >
        <option>{value}</option>
      </select>
      <svg viewBox="0 0 8 5" className="pointer-events-none absolute top-2 right-[5px] h-[5px] w-2">
        <path d="M0 .500l4 4 4-4" fill="none" stroke={disabled ? "#b0b0b0" : "#555"} />
      </svg>
    </div>
  );
}

function ColorTool({ label, color, children }) {
  return (
    <>
      <button type="button" aria-label={label} className="flex h-[22px] w-[22px] flex-col items-center justify-end gap-px pb-px">
        <span className="flex h-4 items-center justify-center">{children}</span>
        <span className={clsx("h-[3px] w-[18px]", color)} />
      </button>
      <DropArrow wide />
    </>
  );
}

const MENUS = [
  "文件(F)", "编辑(E)", "视图(V)", "书签(B)", "插入(I)",
  "选择(S)", "地理处理(G)", "自定义(C)", "窗口(W)", "帮助(H)",
];

function TitleBar() {
  return (
    <header className="flex h-[23px] shrink-0 items-center bg-white pl-[2px]">
      <Icon name="arcmap" />
      <h1 className="ml-[5px] text-[13px] leading-4">0101.mxd - ArcMap</h1>
      <div className="ml-auto flex items-center">
        <button type="button" aria-label="minimize" className="flex h-5 w-[46px] items-center justify-center">
          <span className="h-px w-[10px] bg-black" />
        </button>
        <button type="button" aria-label="restore" className="flex h-5 w-[46px] items-center justify-center">
          <svg viewBox="0 0 10 10" className="size-[10px] overflow-visible" fill="none" stroke="#000">
            <rect x="0.500" y="2.500" width="7" height="7" rx="1" />
            <path d="M2.500.500h5.500a1.500 1.500 0 0 1 1.500 1.500v5.500" />
          </svg>
        </button>
        <button type="button" aria-label="close" className="flex h-5 w-[46px] items-center justify-center">
          <svg viewBox="0 0 10 10" className="size-[10px]" stroke="#000">
            <path d="M0 0l10 10M10 0L0 10" />
          </svg>
        </button>
      </div>
    </header>
  );
}

function Toolbars() {
  return (
    <div className="shrink-0 pl-[3px]">
      <div className="flex">
        <Toolbar>
          <Tool name="new" />
          <Tool name="open" />
          <Tool name="save" />
          <Tool name="print" />
          <Sep />
          <Tool name="cut" />
          <Tool name="copy" />
          <Tool name="paste" />
          <Tool name="delete" />
          <Sep />
          <Tool name="undo" />
          <Tool name="redo" />
          <Sep />
          <Tool name="addData" />
          <DropArrow />
          <Sep />
          <Combo label="scale" value="" disabled className="w-[149px]" />
          <Sep />
          <Tool name="editor" active />
          <Sep />
          <Tool name="toc" />
          <Tool name="catalog" />
          <Tool name="search" />
          <Tool name="toolboxWindow" />
          <Tool name="python" />
          <Sep />
          <Tool name="model" />
        </Toolbar>
        <Toolbar className="ml-[34px]">
          <MenuTool text="绘制(D)" />
          <Tool name="pointer" />
          <Tool name="rotate" />
          <Tool name="zoomSelected" />
          <Sep />
          <Tool name="rectangle" />
          <DropArrow />
          <Tool label="text">
            <span className="font-['Liberation_Serif',serif] text-lg leading-4 font-bold">A</span>
          </Tool>
          <DropArrow />
          <Tool name="editVertices" />
          <Sep />
          <Combo label="font" value="宋体" icon="fontDoc" padding="pl-5" className="ml-[2px] w-[170px]" />
          <Combo label="font size" value="10" className="mr-px ml-px w-[45px]" />
          <Tool label="bold">
            <span className="font-['Liberation_Serif',serif] text-[15px] font-bold">B</span>
          </Tool>
          <Tool label="italic">
            <span className="font-['Liberation_Serif',serif] text-[15px] font-bold italic">I</span>
          </Tool>
          <Tool label="underline">
            <span className="font-['Liberation_Serif',serif] text-[15px] font-bold underline">U</span>
          </Tool>
          <Sep />
          <ColorTool label="font color" color="bg-black">
            <span className="font-['Liberation_Serif',serif] text-[15px] leading-4 font-bold">A</span>
          </ColorTool>
          <ColorTool label="fill color" color="bg-[#ffffb0]">
            <Icon name="bucket" />
          </ColorTool>
          <ColorTool label="line color" color="bg-black">
            <Icon name="pen" />
          </ColorTool>
          <ColorTool label="marker color" color="bg-[#5cf000]">
            <span className="size-[5px] rounded-full bg-[#0000c0]" />
          </ColorTool>
        </Toolbar>
      </div>
      <div className="flex">
        <Toolbar>
          <Tool name="zoomIn" />
          <Tool name="zoomOut" />
          <Tool name="pan" />
          <Tool name="globe" />
          <Sep />
          <Tool name="fixedIn" />
          <Tool name="fixedOut" />
          <Sep />
          <Tool name="back" />
          <Tool name="forward" />
          <Sep />
          <Tool name="selectFeatures" />
          <DropArrow />
          <Tool name="clearSelection" />
          <Sep />
          <Tool name="pointer" />
          <Sep />
          <Tool name="identify" />
          <Tool name="hyperlink" />
          <Tool name="popup" />
          <Sep />
          <Tool name="measure" />
          <Sep />
          <Tool name="find" />
          <Tool name="findRoute" />
          <Tool name="goToXY" />
          <Sep />
          <Tool name="time" />
          <Sep />
          <Tool name="viewer" />
        </Toolbar>
        <Toolbar className="ml-[70px]">
          <MenuTool text="编辑器(R)" />
          <Sep />
          <Tool name="editTool" active />
          <Tool name="editAnno" />
          <Sep />
          <Tool name="straight" />
          <Tool name="arc" />
          <Tool name="trace" />
          <DropArrow muted />
          <Tool name="point" />
          <Sep />
          <Tool name="reshapeVertices" active />
          <Tool name="reshape" />
          <Tool name="cutPolygon" />
          <Tool name="split" />
          <Tool name="rotateTool" />
          <Sep />
          <Tool name="attributes" />
          <Tool name="sketchProps" />
          <Sep />
          <Tool name="createFeatures" />
        </Toolbar>
        <Toolbar className="ml-[44px]">
          <Tool name="pageZoomIn" />
          <Tool name="pageZoomOut" />
          <Tool name="pagePan" />
          <Tool name="pageWhole" />
          <Tool name="pageActual" />
          <Sep />
          <Tool name="pageFixedIn" />
          <Tool name="pageFixedOut" />
          <Sep />
          <Tool name="pageBack" />
          <Tool name="pageForward" />
          <Combo label="page zoom" value="100%" disabled className="w-[60px]" />
          <Sep />
          <Tool name="draftMode" active muted />
          <Tool name="focusFrame" />
          <Tool name="changeLayout" />
          <Tool name="drivenPages" />
        </Toolbar>
      </div>
    </div>
  );
}

function PanelHeader({ title }) {
  return (
    <div className="flex h-[22px] shrink-0 items-center bg-linear-to-r from-[#bfcddb] to-[#d7e4f2] pl-1">
      <h2 className="text-xs">{title}</h2>
      <button type="button" aria-label="auto hide" className="ml-auto flex h-4 w-[15px] items-center justify-center">
        <svg viewBox="0 0 8 10" className="h-[10px] w-2" fill="none" stroke="#000">
          <path d="M1.500.500h4v5h-4zM5 .500v5M0 5.500h8M3.500 6v4" />
        </svg>
      </button>
      <button type="button" aria-label="close panel" className="flex size-4 items-center justify-center">
        <svg viewBox="0 0 8 8" className="size-2" stroke="#000" strokeWidth="1.600">
          <path d="M.500.500l7 7M7.500.500l-7 7" />
        </svg>
      </button>
    </div>
  );
}

function Expander({ open }) {
  return (
    <button
      type="button"
      aria-label={open ? "collapse" : "expand"}
      className="flex size-[9px] shrink-0 items-center justify-center border border-[#919191] bg-[#fafafa]"
    >
      <svg viewBox="0 0 5 5" className="size-[5px]" stroke="#2f4f9f">
        <path d={open ? "M0 2.500h5" : "M0 2.500h5M2.500 0v5"} />
      </svg>
    </button>
  );
}

function TableOfContents() {
  const [visible, setVisible] = useState(true);

  return (
    <aside className="flex w-[276px] shrink-0 flex-col">
      <PanelHeader title="内容列表" />
      <div className="flex h-[26px] shrink-0 items-center bg-[#f7f7f7] pl-1">
        <Tool name="listByDrawing" active />
        <Tool name="listBySource" />
        <Tool name="listByVisibility" />
        <Tool name="listBySelection" />
        <Sep />
        <Tool name="options" />
      </div>
      <div className="flex-1 border border-[#828790] bg-white pt-px text-xs">
        <div className="flex h-5 items-center pl-2">
          <Expander open />
          <span className="ml-[6px]">
            <Icon name="layers" />
          </span>
          <span className="ml-[3px] bg-[#0078d7] px-[2px] leading-[18px] font-bold text-white">图层</span>
        </div>
        <div className="flex h-5 items-center pl-[27px]">
          <Expander open />
          <label className="ml-2 flex items-center gap-2">
            <span className="relative flex size-[11px]">
              <input
                type="checkbox"
                checked={visible}
                onChange={(e) => setVisible(e.target.checked)}
                className="size-[11px] appearance-none border border-black bg-white"
              />
              {visible && (
                <svg viewBox="0 0 11 11" className="pointer-events-none absolute inset-0 size-[11px]">
                  <path d="M2.500 5l2 3 4-5.500" fill="none" stroke="#000" strokeWidth="1.800" />
                </svg>
              )}
            </span>
            line
          </label>
        </div>
        <div className="flex h-5 items-center pl-[59px]">
          <span className="h-px w-[14px] bg-[#a8006c]" />
        </div>
      </div>
    </aside>
  );
}

const VERTICES = [
  [706, 744], [546, 582], [484, 387], [546, 356], [643, 228], [749, 229],
  [857, 229], [1010, 230], [1066, 231], [1180, 230], [1250, 335], [1294, 392],
  [1305, 469], [1317, 560], [1330, 648], [1221, 742], [955, 719], [823, 832],
];

const ELLIPSES = [
  { cx: 917, cy: 239, rx: 204, ry: 39 },
  { cx: 1248, cy: 334, rx: 22, ry: 24 },
  { cx: 1311, cy: 517, rx: 33, ry: 80 },
];

const ARROWS = [
  { from: [943, 371], to: [960, 302] },
  { from: [1074, 388], to: [1206, 355] },
  { from: [1074, 443], to: [1260, 527] },
];

function Arrow({ from, to }) {
  const length = Math.hypot(to[0] - from[0], to[1] - from[1]);
  const angle = (Math.atan2(to[1] - from[1], to[0] - from[0]) * 180) / Math.PI;
  return (
    <g transform={`translate(${from[0]} ${from[1]}) rotate(${angle})`}>
      <path d={`M0 0H${length - 18}`} stroke="#f00000" strokeWidth="3" strokeLinecap="round" />
      <path d={`M${length} 0l-24 -8l5 8l-5 8z`} fill="#f00000" />
    </g>
  );
}

function MapSketch() {
  const points = VERTICES.map((v) => v.join(",")).join(" ");
  return (
    <svg viewBox="287 109 1280 886" className="absolute top-0 left-0 h-[886px] w-[1280px]">
      <g transform="translate(.5 .5)" fill="none" shapeRendering="crispEdges">
        <polyline points={points} stroke="#00f6ff" strokeWidth="3" />
        <polyline points={points} stroke="#6a2c8c" strokeWidth="1" />
      </g>
      {VERTICES.map(([x, y], i) => (
        <rect
          key={i}
          x={x - 3}
          y={y - 3}
          width="7"
          height="7"
          fill={i === VERTICES.length - 1 ? "#ff0000" : "#008000"}
        />
      ))}
      <path d="M903 526l9 9M912 526l-9 9" stroke="#2b2b6b" strokeWidth="1.200" />
      <g className="drop-shadow-[2px_4px_3px_rgba(0,0,0,0.45)]">
        {ELLIPSES.map((e, i) => (
          <ellipse key={i} {...e} fill="none" stroke="#f00000" strokeWidth="3" />
        ))}
        {ARROWS.map((a, i) => (
          <Arrow key={i} {...a} />
        ))}
        <text
          x="885"
          y="429"
          fill="#ff0000"
          stroke="#fff"
          strokeWidth="6"
          strokeLinejoin="round"
          paintOrder="stroke"
          className="font-['Noto_Sans_CJK_SC',sans-serif] text-[37px]"
        >
          冗余节点
        </text>
      </g>
    </svg>
  );
}

function VertexToolbar() {
  return (
    <div className="absolute top-[3px] left-[2px] border-[3px] border-[#868686] bg-[#f4f4f4]">
      <div className="flex h-4 items-center bg-[#a0a0a0] pr-1 pl-[2px] text-xs text-white">
        编辑折点
        <svg viewBox="0 0 8 4" className="ml-auto h-1 w-2">
          <path d="M0 0h8L4 4z" fill="#fff" />
        </svg>
        <button type="button" aria-label="close toolbar" className="ml-[9px]">
          <svg viewBox="0 0 8 8" className="size-2" stroke="#fff" strokeWidth="2">
            <path d="M.500.500l7 7M7.500.500l-7 7" />
          </svg>
        </button>
      </div>
      <div className="flex h-6 items-center">
        <Tool name="vertexEdit" active />
        <Tool name="vertexAdd" />
        <Tool name="vertexDelete" />
        <Sep />
        <Tool name="continueFeature" />
        <Sep />
        <Tool name="finishPart" />
        <Tool name="finishSketch" />
        <Sep />
        <Tool name="sketchProps" />
      </div>
    </div>
  );
}

function MapView() {
  return (
    <main className="ml-[6px] flex min-w-0 flex-1 flex-col border-t-2 border-l-2 border-[#6b6b6b] bg-[#f0f0f0]">
      <div className="flex min-h-0 flex-1">
        <div className="relative min-w-0 flex-1 overflow-hidden border-r border-b border-[#e0e0e0] bg-[#fdfffe]">
          <MapSketch />
          <VertexToolbar />
        </div>
        <div className="flex w-4 justify-center pt-4 pb-5">
          <span className="w-[2px] bg-[#868686]" />
        </div>
      </div>
      <div className="flex h-[17px] shrink-0 items-center">
        <button type="button" aria-label="data view" className="flex h-4 w-[15px] items-center justify-center border border-[#99d1ff] bg-[#cce8ff]">
          <svg viewBox="0 0 8 9" className="h-[9px] w-2">
            <rect x=".500" y=".500" width="7" height="8" fill="#cfe08a" stroke="#222" />
            <path d="M2 7l3-5" stroke="#5c9a3a" />
          </svg>
        </button>
        <button type="button" aria-label="layout view" className="flex h-4 w-5 items-center justify-center">
          <svg viewBox="0 0 8 9" className="h-[9px] w-2">
            <path d="M.500.500h5l2 2v6h-7z" fill="#fff" stroke="#222" />
            <path d="M2 4h3M2 6.500h4" stroke="#2f80c4" />
          </svg>
        </button>
        <span className="h-4 w-px bg-[#868686]" />
        <button type="button" aria-label="refresh" className="ml-1 flex h-4 w-[18px] items-center justify-center">
          <svg viewBox="0 0 10 10" className="size-[9px]" fill="none" stroke="#16508e" strokeWidth="1.500">
            <path d="M1 4.500C2 0 7 0 8.500 3M9 .500V4H6M9 5.500C8 10 3 10 1.500 7M1 9.500V6h3" />
          </svg>
        </button>
        <button type="button" aria-label="pause drawing" className="flex h-4 w-4 items-center justify-center">
          <svg viewBox="0 0 6 8" className="h-2 w-[6px]">
            <path d="M0 0h2v8H0zM4 0h2v8H4z" fill="#2257a8" />
          </svg>
        </button>
        <span className="mr-[35px] ml-4 h-[2px] flex-1 bg-[#868686]" />
      </div>
    </main>
  );
}

const CATALOG = [
  { level: 0, open: true, icon: "folderHome", text: "默认工作目录 - Desktop\\0101", selected: true },
  { level: 1, icon: "mxd", text: "0101.mxd", bold: true },
  { level: 1, icon: "shapefile", text: "line.shp" },
  { level: 0, open: true, icon: "folderConnections", text: "文件夹连接" },
  { level: 1, open: false, icon: "folderConnected", text: "C:\\" },
  { level: 1, open: false, icon: "folderConnected", text: "C:\\Users\\Administrator\\Desktop" },
  { level: 1, open: false, icon: "folderConnected", text: "D:\\" },
  { level: 1, open: false, icon: "folderConnected", text: "E:\\" },
  { level: 1, open: false, icon: "folderConnected", text: "F:\\" },
  { level: 0, open: true, icon: "toolboxFolder", text: "工具箱" },
  { level: 1, open: false, icon: "toolboxFolder", text: "我的工具箱" },
  { level: 1, open: false, icon: "toolboxFolder", text: "系统工具箱" },
  { level: 0, open: true, icon: "dbServers", text: "数据库服务器" },
  { level: 1, icon: "addDbServer", text: "添加数据库服务器" },
  { level: 0, open: true, icon: "dbConnections", text: "数据库连接" },
  { level: 1, icon: "addDbConnection", text: "添加 数据库连接" },
  { level: 0, open: true, icon: "gisServers", text: "GIS 服务器" },
  { level: 1, icon: "arcgisServer", text: "添加 ArcGIS Server" },
  { level: 1, icon: "arcimsServer", text: "添加 ArcIMS Server" },
  { level: 1, icon: "wcsServer", text: "添加 WCS 服务器" },
  { level: 1, icon: "wmsServer", text: "添加 WMS 服务器" },
  { level: 1, icon: "wmtsServer", text: "添加 WMTS 服务器" },
  { level: 1, icon: "serverOffline", text: "ArcGIS on services.arcgisonline.com (用户) (2)" },
  { level: 0, open: false, icon: "cloudFolder", text: "我托管的服务" },
  { level: 0, open: false, icon: "cloudFolder", text: "即用型服务" },
];

function CatalogTool({ name }) {
  return (
    <button type="button" aria-label={name} className="flex h-[22px] w-6 shrink-0 items-center justify-center">
      <Icon name={name} />
    </button>
  );
}

function CatalogArrow({ label }) {
  return (
    <button type="button" aria-label={label} className="flex h-[22px] w-[14px] shrink-0 items-center justify-center">
      <svg viewBox="0 0 8 4" className="h-1 w-2">
        <path d="M0 0h8L4 4z" fill="#6d6d6d" />
      </svg>
    </button>
  );
}

function CatalogSep() {
  return (
    <span className="flex w-[7px] shrink-0 justify-center">
      <span className="h-[18px] w-px bg-[#8a8a8a]" />
    </span>
  );
}

function CatalogPanel() {
  return (
    <aside className="ml-[6px] flex w-[333px] shrink-0 flex-col">
      <PanelHeader title="目录" />
      <div className="flex h-6 shrink-0 items-center border-b border-[#d8d8d8] bg-white pl-[2px]">
        <CatalogTool name="catBack" />
        <CatalogArrow label="back history" />
        <CatalogTool name="catForward" />
        <CatalogTool name="catUp" />
        <CatalogTool name="catHome" />
        <CatalogTool name="catDatabase" />
        <CatalogSep />
        <CatalogTool name="catView" />
        <CatalogArrow label="view options" />
        <CatalogSep />
        <CatalogTool name="catConnect" />
        <CatalogSep />
        <CatalogTool name="catTree" />
        <CatalogSep />
        <CatalogTool name="options" />
      </div>
      <div className="flex h-[25px] shrink-0 items-center bg-[#f4f4f4] pr-1 pl-[3px]">
        <span className="w-[51px] text-xs">位置:</span>
        <Combo
          label="位置"
          value="默认工作目录 - Desktop\0101"
          icon="folderHome"
          padding="pl-[22px]"
          className="flex-1"
        />
      </div>
      <div className="mr-[5px] ml-px flex flex-1 flex-col border-t-2 border-l-2 border-[#6b6b6b] bg-white">
        <ul className="flex-1">
          {CATALOG.map((item, i) => (
            <li key={i} className={clsx("flex h-[17px] items-center", item.level === 1 && "pl-[19px]")}>
              <span className="flex w-[19px] shrink-0 justify-center">
                {item.open !== undefined && <Expander open={item.open} />}
              </span>
              <span className="flex w-5 shrink-0 justify-center">
                <Icon name={item.icon} />
              </span>
              <span
                className={clsx(
                  "px-[2px] text-xs leading-[17px] whitespace-nowrap",
                  item.selected && "bg-[#f0f0f0]",
                  item.bold && "font-bold",
                )}
              >
                {item.text}
              </span>
            </li>
          ))}
        </ul>
        <div className="flex h-4 shrink-0 items-center bg-[#f0f0f0] px-[18px]">
          <span className="h-[2px] flex-1 bg-[#868686]" />
        </div>
      </div>
      <div className="flex h-[25px] shrink-0 items-start bg-[#fafafa] pt-1 pl-[2px] text-xs">
        <button type="button" className="flex h-5 items-center gap-[3px] rounded-b border border-t-0 border-[#868686] bg-white px-1 whitespace-nowrap">
          <Icon name="catalog" />
          目录
        </button>
        <button type="button" className="flex h-5 items-center gap-[3px] rounded-b border border-t-0 border-[#868686] bg-[#f4f4f4] px-1 whitespace-nowrap text-[#6d6d6d]">
          <Icon name="search" />
          搜索
        </button>
      </div>
    </aside>
  );
}

function StatusBar() {
  return (
    <footer className="flex h-[22px] shrink-0 items-center justify-end gap-[2px] bg-[#f0f0f0] text-xs">
      <span className="h-[18px] w-[127px] border border-[#f8f8f8]" />
      <span className="h-[18px] w-[18px] border border-[#f8f8f8]" />
      <span className="h-[18px] w-[285px] border border-[#f8f8f8] pl-[3px] leading-5 whitespace-pre">
        40393672.667{"   "}3558961.043 未知单位
      </span>
    </footer>
  );
}

function ImeBar() {
  return (
    <div className="absolute right-3 bottom-[173px] flex items-center">
      <svg viewBox="0 0 32 30" className="z-10 -mr-4 h-[30px] w-8">
        <rect x="2" y="1" width="28" height="28" rx="4" transform="rotate(-12 16 15)" fill="#f4511e" />
        <path d="M24 8c-5-2-15-1-15 3 0 4 14 3 14 7 0 4-9 5-15 2" fill="none" stroke="#fff" strokeWidth="4" />
      </svg>
      <div className="flex h-[26px] items-center rounded-sm border border-[#b4cbe4] bg-white pl-[18px] text-[#0070dd]">
        <button type="button" className="w-6 font-['Noto_Sans_CJK_SC',sans-serif] text-[15px] leading-5 font-bold">中</button>
        <button type="button" aria-label="half width" className="flex w-6 justify-center">
          <svg viewBox="0 0 16 16" className="size-[14px]" fill="currentColor">
            <path d="M10 1c5 3 6 9 2 12.500S3 16 1 11c6 2 11-3 9-10z" />
          </svg>
        </button>
        <button type="button" aria-label="punctuation" className="flex w-6 justify-center">
          <svg viewBox="0 0 16 16" className="size-[14px]" fill="currentColor">
            <circle cx="4" cy="5" r="2" fill="none" stroke="currentColor" strokeWidth="1.600" />
            <path d="M10 8a2 2 0 1 1 4 1c0 2-1 4-3 5 1-1 1.500-2 1-3-1 0-2-1-2-3z" />
          </svg>
        </button>
        <button type="button" aria-label="voice" className="flex w-6 justify-center">
          <svg viewBox="0 0 16 16" className="size-4" fill="currentColor">
            <rect x="5" y="0" width="6" height="10" rx="3" />
            <path d="M2.500 7c0 7 11 7 11 0M6 15.200h4" fill="none" stroke="currentColor" strokeWidth="1.600" />
          </svg>
        </button>
        <button type="button" aria-label="keyboard" className="flex w-6 justify-center">
          <svg viewBox="0 0 16 14" className="h-[14px] w-4">
            <rect x=".800" y="1.800" width="14.400" height="11" rx="1" fill="none" stroke="currentColor" strokeWidth="1.600" />
            <path d="M3 5h10M3 7.500h10" stroke="currentColor" strokeWidth="1.600" strokeDasharray="2 .700" />
            <path d="M5 10.500h6" stroke="currentColor" strokeWidth="1.400" />
          </svg>
        </button>
        <button type="button" aria-label="account" className="relative flex w-6 justify-center">
          <svg viewBox="0 0 16 16" className="size-4" fill="currentColor">
            <circle cx="7" cy="4" r="4" />
            <path d="M0 15c0-7 5-6 7-6s3 0 4 1v5z" />
          </svg>
          <span className="absolute right-0 bottom-0 bg-white px-px text-[8px] leading-2 font-bold">45</span>
        </button>
        <button type="button" aria-label="skin" className="flex w-6 justify-center">
          <svg viewBox="0 0 16 16" className="size-4" fill="currentColor">
            <path d="M1 1.500h4c1 2 5 2 6 0h4l1 5-3 1V15H3V7.500l-3-1z" />
          </svg>
        </button>
        <button type="button" aria-label="toolbox" className="flex w-6 justify-center">
          <svg viewBox="0 0 16 16" className="size-[14px]" fill="currentColor">
            <rect x="1" y="1" width="6" height="6" rx="1.500" />
            <circle cx="12" cy="4" r="2.400" fill="none" stroke="currentColor" strokeWidth="1.500" />
            <rect x="1" y="9" width="6" height="6" rx="1.500" />
            <rect x="9" y="9" width="6" height="6" rx="1.500" />
          </svg>
        </button>
      </div>
    </div>
  );
}

function Watermarks() {
  return (
    <>
      <div className="pointer-events-none absolute right-[43px] bottom-[50px] flex items-center font-['Liberation_Serif','Noto_Sans_CJK_SC',serif] leading-[72px] whitespace-nowrap text-[#3333ff]">
        <span className="text-[70px] italic">@</span>
        <span className="ml-7 flex gap-5 text-[52px] font-bold">
          <span>刘</span>
          <span>一</span>
          <span>哥</span>
        </span>
        <span className="ml-[14px] text-[70px]">GIS</span>
      </div>
      <div className="pointer-events-none absolute right-[14px] bottom-[6px] font-['Liberation_Sans','Noto_Sans_CJK_SC',sans-serif] text-[17px] leading-6 whitespace-nowrap text-[#777]/70">
        CSDN @刘一哥GIS
      </div>
    </>
  );
}

function App() {
  return (
    <div className={clsx("relative h-screen overflow-hidden bg-white p-[3px] text-black", FONT)}>
      <div className="flex h-full flex-col border-r-2 border-b-2 border-[#868686] bg-linear-to-r from-[#f0f0f0] to-[#fafafa]">
        <TitleBar />
        <nav className="flex h-[27px] shrink-0 items-center gap-px pl-1 text-xs">
          {MENUS.map((menu) => (
            <button key={menu} type="button" className="px-2 whitespace-nowrap">
              {menu}
            </button>
          ))}
        </nav>
        <Toolbars />
        <div className="flex min-h-0 flex-1">
          <TableOfContents />
          <MapView />
          <CatalogPanel />
        </div>
        <StatusBar />
      </div>
      <ImeBar />
      <Watermarks />
    </div>
  );
}

export default App;
